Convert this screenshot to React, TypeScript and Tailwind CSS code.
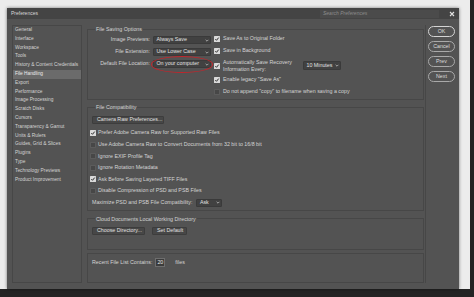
import React from "react";

const font = { fontFamily: '"Liberation Sans", Arial, sans-serif' };

function Chevron() {
  return (
    <svg width="4" height="3" viewBox="0 0 4 3" className="shrink-0">
      <path d="M0.6 0.8 L2 2.2 L3.4 0.8" stroke="#cfcfcf" strokeWidth="0.7" fill="none" />
    </svg>
  );
}

function Dropdown({ label, cls }: { label: string; cls: string }) {
  return (
    <div
      className={`flex items-center justify-between h-[8.5px] bg-[#414141] border border-[#3a3a3a] rounded-[1px] pl-[2.5px] pr-[1.5px] text-[#e2e2e2] ${cls}`}
    >
      <span className="leading-none whitespace-nowrap">{label}</span>
      <Chevron />
    </div>
  );
}

function Box({ checked }: { checked: boolean }) {
  return checked ? (
    <div className="w-[6px] h-[6px] shrink-0 bg-[#dadada] rounded-[0.5px] flex items-center justify-center">
      <svg width="6" height="6" viewBox="0 0 6 6">
        <path d="M1.3 3.1 L2.5 4.3 L4.7 1.6" stroke="#2e2e2e" strokeWidth="1" fill="none" />
      </svg>
    </div>
  ) : (
    <div className="w-[6px] h-[6px] shrink-0 bg-[#474747] border border-[#5c5c5c] rounded-[0.5px]" />
  );
}

function Check({ checked, label, h = "h-[11.6px]" }: { checked: boolean; label: string; h?: string }) {
  return (
    <div className={`flex items-center gap-[2px] ${h}`}>
      <Box checked={checked} />
      <span className="leading-none whitespace-nowrap">{label}</span>
    </div>
  );
}

function Btn({ label, cls }: { label: string; cls: string }) {
  return (
    <div
      className={`flex items-center h-[8px] bg-[#474747] border border-[#3d3d3d] rounded-[1px] pl-[4px] text-[#e0e0e0] ${cls}`}
    >
      <span className="leading-none whitespace-nowrap">{label}</span>
    </div>
  );
}

function Pill({ label, ok }: { label: string; ok?: boolean }) {
  return (
    <div
      className={`h-[11px] rounded-full flex items-center justify-center text-[#dcdcdc] ${
        ok ? "border-[1.5px] border-[#d4d4d4]" : "border border-[#a9a9a9]"
      }`}
    >
      <span className="leading-none">{label}</span>
    </div>
  );
}

const sideItems = [
  "General",
  "Interface",
  "Workspace",
  "Tools",
  "History & Content Credentials",
  "File Handling",
  "Export",
  "Performance",
  "Image Processing",
  "Scratch Disks",
  "Cursors",
  "Transparency & Gamut",
  "Units & Rulers",
  "Guides, Grid & Slices",
  "Plugins",
  "Type",
  "Technology Previews",
  "Product Improvement",
];

export default function App() {
  return (
    <div className="w-[474px] h-[297px] bg-[#242424] pr-[4px] pb-[8px] overflow-hidden" style={font}>
      <div className="h-full bg-[#ececec] pl-[7px] pt-[8px] pr-[11px]">
        <div className="w-[452px] h-[281px] bg-[#535353] flex flex-col text-[5px] text-[#d3d3d3] shadow-[0_0_3px_rgba(0,0,0,0.5)]">
          {/* title bar */}
          <div className="h-[11px] bg-[#444444] flex items-center pl-[4px] pr-[4px]">
            <span className="leading-none text-[#d8d8d8]">Preferences</span>
            <div className="flex-1" />
            <div className="w-[119px] h-[8px] bg-[#4b4b4b] flex items-center pl-[3px]">
              <span className="leading-none italic text-[#8b8b8b]">Search Preferences</span>
            </div>
            <div className="w-[10px]" />
            <svg width="6" height="6" viewBox="0 0 6 6">
              <path d="M1 1 L5 5 M5 1 L1 5" stroke="#e0e0e0" strokeWidth="1.1" />
            </svg>
          </div>

          {/* body */}
          <div className="flex-1 flex pt-[6px] pb-[6px] pl-[5px] pr-[4px]">
            {/* sidebar */}
            <div className="w-[70px] border border-[#474747] flex flex-col text-[4.8px]">
              {sideItems.map((it) => (
                <div
                  key={it}
                  className={`h-[8.8px] flex items-center pl-[2px] whitespace-nowrap ${
                    it === "File Handling" ? "bg-[#6b6b6b] text-[#ececec]" : ""
                  }`}
                >
                  <span className="leading-none">{it}</span>
                </div>
              ))}
            </div>

            {/* main */}
            <div className="ml-[5px] w-[337px] flex flex-col text-[5.3px]">
              {/* File Saving Options */}
              <fieldset className="mt-[1px] border border-[#474747]">
                <legend className="ml-[7px] px-[1px] leading-[6px]">File Saving Options</legend>
                <div className="flex pb-[1px]">
                  <div className="flex flex-col pt-[2px]">
                    {[
                      ["Image Previews:", "Always Save"],
                      ["File Extension:", "Use Lower Case"],
                      ["Default File Location:", "On your computer"],
                    ].map(([l, v]) => (
                      <div key={l} className="h-[12px] flex items-center">
                        <span className="w-[62px] text-right leading-none whitespace-nowrap">{l}</span>
                        <div className="ml-[3px] relative">
                          <Dropdown label={v} cls="w-[58px]" />
                          {v === "On your computer" && (
                            <span className="absolute -left-[2px] -right-[2px] -top-[3.5px] -bottom-[4.5px] rounded-[50%] border-[1.3px] border-[#c0262c]" />
                          )}
                        </div>
                      </div>
                    ))}
                  </div>
                  <div className="ml-[3px] flex flex-col pt-[1px]">
                    <div className="h-[12px] flex items-center gap-[3px]">
                      <Box checked />
                      <span className="leading-none">Save As to Original Folder</span>
                    </div>
                    <div className="h-[12px] flex items-center gap-[3px]">
                      <Box checked />
                      <span className="leading-none">Save in Background</span>
                    </div>
                    <div className="h-[17px] flex items-center gap-[3px]">
                      <Box checked />
                      <div className="w-[77px] flex flex-col leading-[7px] whitespace-nowrap">
                        <span>Automatically Save Recovery</span>
                        <span>Information Every:</span>
                      </div>
                      <Dropdown label="10 Minutes" cls="w-[38px]" />
                    </div>
                    <div className="h-[12px] flex items-center gap-[3px]">
                      <Box checked />
                      <span className="leading-none">Enable legacy "Save As"</span>
                    </div>
                    <div className="h-[12px] flex items-center gap-[3px]">
                      <Box checked={false} />
                      <span className="leading-none whitespace-nowrap">
                        Do not append "copy" to filename when saving a copy
                      </span>
                    </div>
                  </div>
                </div>
              </fieldset>

              {/* File Compatibility */}
              <fieldset className="mt-[4px] border border-[#474747]">
                <legend className="ml-[7px] px-[1px] leading-[6px]">File Compatibility</legend>
                <div className="flex flex-col pl-[2px] pt-[5.5px] pb-[1px]">
                  <Btn label="Camera Raw Preferences..." cls="w-[72px] ml-[2px]" />
                  <div className="h-[3.7px]" />
                  <Check checked label="Prefer Adobe Camera Raw for Supported Raw Files" />
                  <Check checked={false} label="Use Adobe Camera Raw to Convert Documents from 32 bit to 16/8 bit" />
                  <Check checked={false} label="Ignore EXIF Profile Tag" />
                  <Check checked={false} label="Ignore Rotation Metadata" />
                  <Check checked label="Ask Before Saving Layered TIFF Files" />
                  <Check checked={false} label="Disable Compression of PSD and PSB Files" />
                  <div className="h-[12px] flex items-center pl-[2px]">
                    <span className="leading-none whitespace-nowrap">Maximize PSD and PSB File Compatibility:</span>
                    <Dropdown label="Ask" cls="w-[26px] ml-[4px]" />
                  </div>
                </div>
              </fieldset>

              {/* Cloud Documents */}
              <fieldset className="mt-[5px] border border-[#474747]">
                <legend className="ml-[7px] px-[1px] leading-[6px]">Cloud Documents Local Working Directory</legend>
                <div className="flex gap-[7px] pl-[4px] pt-[5px] pb-[14px]">
                  <Btn label="Choose Directory..." cls="w-[53px]" />
                  <Btn label="Set Default" cls="w-[35px]" />
                </div>
              </fieldset>

              {/* Recent files */}
              <div className="mt-[3px] flex-1 border border-[#474747] pt-[4px] pl-[4px]">
                <div className="h-[10px] flex items-center">
                  <span className="leading-none whitespace-nowrap">Recent File List Contains:</span>
                  <div className="ml-[3px] w-[10px] h-[9px] bg-[#3c3c3c] border border-[#6e6e6e] flex items-center justify-center text-[#e6e6e6]">
                    <span className="leading-none">20</span>
                  </div>
                  <span className="ml-[10px] leading-none">files</span>
                </div>
              </div>
            </div>

            {/* buttons column */}
            <div className="ml-[1px] border-l border-[#474747] pl-[2px] w-[30px] flex flex-col pt-[1px] text-[5.3px]">
              <div className="w-[27px] flex flex-col gap-[4px]">
                <Pill label="OK" ok />
                <Pill label="Cancel" />
                <Pill label="Prev" />
                <Pill label="Next" />
              </div>
            </div>
          </div>
        </div>
      </div>
    </div>
  );
}
